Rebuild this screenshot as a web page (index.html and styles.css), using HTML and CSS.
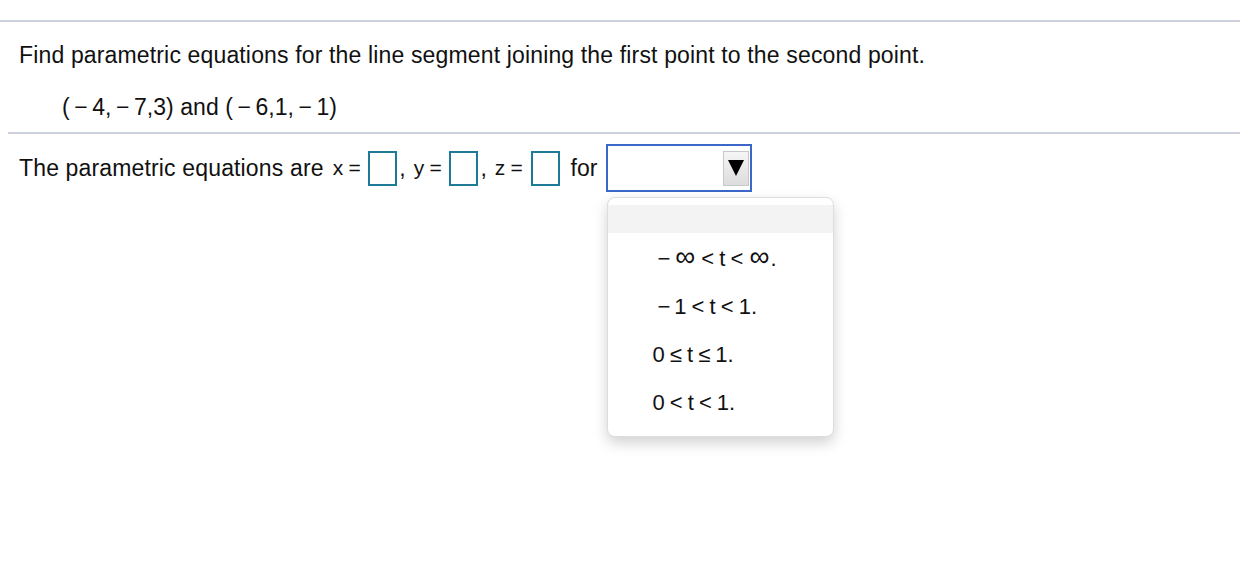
FILE: index.html
```html
<!DOCTYPE html>
<html>
<head>
<meta charset="utf-8">
<link rel="stylesheet" href="styles.css">
</head>
<body>
<div class="rule rule-top"></div>
<div class="question">Find parametric equations for the line segment joining the first point to the second point.</div>
<div class="points">(<span class="op">&minus;</span>4,<span class="op">&minus;</span>7,3) and (<span class="op">&minus;</span>6,1,<span class="op">&minus;</span>1)</div>
<div class="rule rule-mid"></div>
<div class="answer">
  <span class="lead">The parametric equations are</span>
  <span class="var">x =</span><span class="box"></span><span class="comma">,</span>
  <span class="var var-next">y =</span><span class="box"></span><span class="comma">,</span>
  <span class="var var-next">z =</span><span class="box"></span>
  <span class="for">for</span>
  <span class="select">
    <span class="select-btn"><span class="tri"></span></span>
    <span class="menu">
      <span class="menu-blank"></span>
      <span class="item item-neg"><span class="op">&minus;</span><span class="inf">&infin;</span> &lt; t &lt; <span class="inf">&infin;</span>.</span>
      <span class="item item-neg"><span class="op">&minus;</span>1 &lt; t &lt; 1.</span>
      <span class="item">0 &le; t &le; 1.</span>
      <span class="item">0 &lt; t &lt; 1.</span>
    </span>
  </span>
</div>
</body>
</html>
```
FILE: styles.css
```css
html, body {
  margin: 0;
  padding: 0;
  background: #ffffff;
}
body {
  font-family: "Liberation Sans", Arial, sans-serif;
  font-size: 23px;
  color: #111111;
  width: 1240px;
  height: 584px;
  overflow: hidden;
}
.rule {
  height: 2px;
  background: #cdd1de;
}
.rule-top {
  margin-top: 20px;
}
.question {
  padding-left: 19px;
  margin-top: 20px;
  line-height: 26px;
  letter-spacing: 0.15px;
}
.points {
  padding-left: 62px;
  margin-top: 26px;
  line-height: 26px;
  letter-spacing: 0.05px;
}
.op {
  margin: 0 4.5px;
}
.rule-mid {
  margin-left: 8px;
  margin-top: 12px;
}
.answer {
  display: flex;
  align-items: center;
  padding-left: 19px;
  margin-top: 10px;
  height: 48px;
}
.lead {
  letter-spacing: 0.15px;
}
.var {
  font-size: 21px;
  margin-left: 9px;
  margin-right: 8px;
  letter-spacing: -0.3px;
}
.var-next {
  margin-left: 8px;
}
.box {
  width: 25px;
  height: 31px;
  border: 2px solid #1f7a98;
  display: inline-block;
  flex: none;
}
.comma {
  margin-left: 2px;
}
.for {
  margin-left: 11px;
  margin-right: 9px;
}
.select {
  position: relative;
  width: 141px;
  height: 44px;
  border: 2px solid #3a67c9;
  display: flex;
  align-items: center;
  justify-content: flex-end;
  padding-right: 1px;
  box-sizing: content-box;
  flex: none;
}
.select-btn {
  width: 24px;
  height: 33px;
  border: 1px solid #c8c8c8;
  background: linear-gradient(#f6f6f6, #dcdcdc);
  display: flex;
  align-items: center;
  justify-content: center;
}
.tri {
  width: 0;
  height: 0;
  border-left: 8px solid transparent;
  border-right: 8px solid transparent;
  border-top: 16px solid #000000;
}
.menu {
  position: absolute;
  left: -1px;
  top: 51px;
  width: 225px;
  height: 238px;
  background: #ffffff;
  border: 1px solid #dddddd;
  border-radius: 8px;
  box-shadow: 0 6px 14px rgba(0, 0, 0, 0.18);
  display: flex;
  flex-direction: column;
  overflow: hidden;
  font-size: 22px;
}
.menu .op {
  margin: 0 4px 0 0;
}
.inf {
  font-size: 28px;
  line-height: 20px;
  margin: 0 1px;
}
.menu-blank {
  height: 28px;
  margin-top: 7px;
  background: #f3f3f3;
  flex: none;
}
.item {
  height: 48px;
  line-height: 48px;
  padding-left: 44px;
  flex: none;
  color: #111111;
  word-spacing: -1px;
}
.item:nth-child(2) {
  margin-top: 2px;
}
.item-neg {
  padding-left: 49px;
}
```
